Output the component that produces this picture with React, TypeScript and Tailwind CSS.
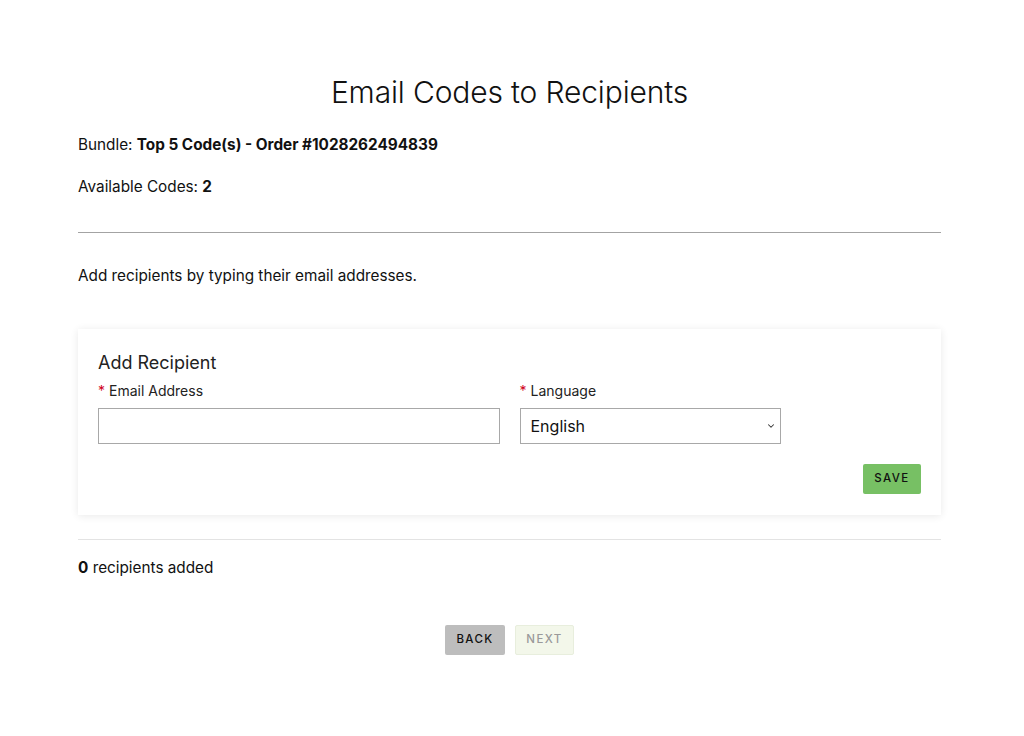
import { ChevronDown } from 'lucide-react';

export default function App() {
  return (
    <div className="min-h-screen bg-white text-[#111] font-['Inter',sans-serif]">
      <div className="ml-[78px] w-[863px] pt-[74px] pb-10">
        <h1 className="text-center text-[30px] leading-[36px] font-light tracking-[-0.005em]">
          Email Codes to Recipients
        </h1>

        <p className="mt-[23px] text-[15.3px] leading-6">
          Bundle: <span className="font-bold">Top 5 Code(s) - Order #1028262494839</span>
        </p>
        <p className="mt-[18px] text-[15.3px] leading-6">
          Available Codes: <span className="font-bold">2</span>
        </p>

        <hr className="mt-[33px] border-0 border-t border-[#a3a3a3]" />

        <p className="mt-[31px] text-[15.3px] leading-6">Add recipients by typing their email addresses.</p>

        {/* Add recipient card */}
        <div className="mt-[41px] bg-white px-5 pt-[21px] pb-[21px] shadow-[0_1px_8px_rgba(0,0,0,0.09)]">
          <h2 className="text-[18px] leading-[26px] text-[#222]">Add Recipient</h2>
          <div className="mt-[5px] grid grid-cols-2 gap-5">
            <div>
              <label className="block text-[14px] leading-5 text-[#222]">
                <span className="text-[#d0021b] mr-1">*</span>Email Address
              </label>
              <input
                type="email"
                className="mt-[7px] block h-9 w-full border border-[#a8a8a8] bg-white px-2 text-[16px] outline-none"
              />
            </div>
            <div>
              <label className="block text-[14px] leading-5 text-[#222]">
                <span className="text-[#d0021b] mr-1">*</span>Language
              </label>
              <div className="relative mt-[7px] h-9 w-[261px]">
                <select className="block h-9 w-full appearance-none border border-[#a8a8a8] bg-white pl-[10px] pr-8 text-[16px] text-[#111] outline-none">
                  <option>English</option>
                </select>
                <ChevronDown
                  className="pointer-events-none absolute right-[5px] top-[13px] h-[10px] w-[10px] text-[#333]"
                  strokeWidth={2.5}
                />
              </div>
            </div>
          </div>
          <div className="mt-5 flex justify-end">
            <button className="h-[30px] w-[58px] rounded-[2px] bg-[#77c064] text-[11.5px] font-medium tracking-[0.12em] text-[#111]">
              SAVE
            </button>
          </div>
        </div>

        <hr className="mt-6 border-0 border-t border-[#e3e3e3]" />

        <p className="mt-4 text-[15.3px] leading-6">
          <span className="font-bold">0</span> recipients added
        </p>

        <div className="mt-[45px] flex justify-center gap-[10px]">
          <button className="h-[30px] w-[60px] rounded-[2px] bg-[#bdbdbd] text-[11.5px] font-medium tracking-[0.12em] text-[#111]">
            BACK
          </button>
          <button
            disabled
            className="h-[30px] w-[59px] rounded-[2px] border border-[#e8eedd] bg-[#f3f7ea] text-[11.5px] font-medium tracking-[0.12em] text-[#9a9a9a]"
          >
            NEXT
          </button>
        </div>
      </div>
    </div>
  );
}
